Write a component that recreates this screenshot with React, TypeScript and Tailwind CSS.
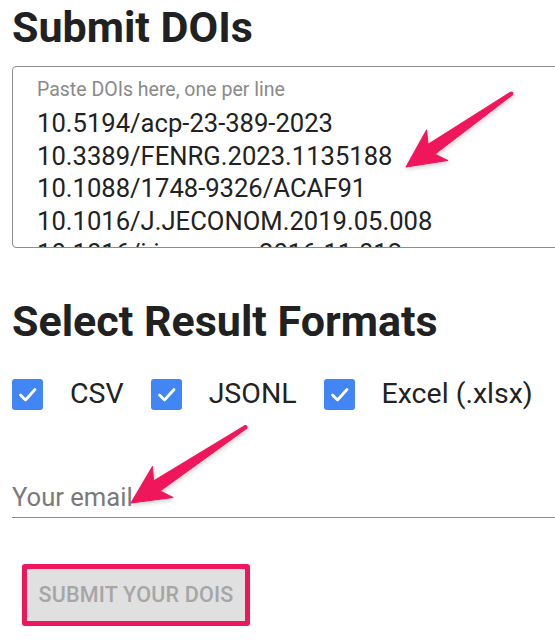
import React from "react";

const dois = [
  "10.5194/acp-23-389-2023",
  "10.3389/FENRG.2023.1135188",
  "10.1088/1748-9326/ACAF91",
  "10.1016/J.JECONOM.2019.05.008",
  "10.1016/j.jeconom.2016.11.012",
];

function Check() {
  return (
    <span className="flex h-[31px] w-[31px] shrink-0 items-center justify-center rounded-[3px] bg-[#4285f4]">
      <svg width="31" height="31" viewBox="0 0 31 31">
        <polyline
          points="8.5,16 13.5,21 23,10.5"
          fill="none"
          stroke="#ffffff"
          strokeWidth="2.8"
          strokeLinecap="round"
          strokeLinejoin="round"
        />
      </svg>
    </span>
  );
}

function Option({ label }: { label: string }) {
  return (
    <label className="flex items-center gap-[27px]">
      <Check />
      <span className="text-[28.5px] leading-[32px] text-[#222]">{label}</span>
    </label>
  );
}

function Arrow({ x, y, angle, len }: { x: number; y: number; angle: number; len: number }) {
  const pts = `0,0 38,-18.5 31,-6 ${len},-1.6 ${len + 1.2},0 ${len},1.6 31,6 38,18.5`;
  return (
    <g transform={`translate(${x} ${y}) rotate(${angle})`}>
      <polygon points={pts} fill="#f0165b" stroke="#f0165b" strokeWidth="1" strokeLinejoin="round" />
    </g>
  );
}

export default function App() {
  return (
    <div className="relative h-[640px] w-[555px] overflow-hidden bg-white pl-[12px] font-['Roboto',sans-serif]">
      <h1 className="pt-[2px] text-[43px] font-bold leading-[50px] text-[#212121]">Submit DOIs</h1>

      <div className="mt-[14px] h-[182px] w-[570px] overflow-hidden rounded-[4px] border border-[#8d8d8d] pl-[24px] pt-[13px]">
        <div className="text-[19.5px] leading-[19px] text-[#8a8a8a]">Paste DOIs here, one per line</div>
        <div className="mt-[8px] text-[25.6px] leading-[32.5px] text-[#222]">
          {dois.map((d) => (
            <div key={d}>{d}</div>
          ))}
        </div>
      </div>

      <h2 className="mt-[48px] text-[43px] font-bold leading-[50px] text-[#212121]">Select Result Formats</h2>

      <div className="mt-[32px] flex items-center gap-[27px]">
        <Option label="CSV" />
        <Option label="JSONL" />
        <Option label="Excel (.xlsx)" />
      </div>

      <div className="mt-[72px] w-[570px] border-b border-[#8d8d8d] pb-[5px]">
        <div className="text-[25.6px] leading-[30px] text-[#7a7a7a]">Your email</div>
      </div>

      <div className="ml-[10px] mt-[46px] w-[228px] rounded-[3px] border-[5px] border-[#f0165b]">
        <div className="flex h-[52px] items-center justify-center bg-[#e0e0e0] text-[21.5px] font-medium tracking-[0.01em] text-[#a6a6a6]">
          SUBMIT YOUR DOIS
        </div>
      </div>

      <svg
        className="pointer-events-none absolute left-0 top-0"
        width="555"
        height="640"
        style={{ filter: "drop-shadow(1px 2px 2px rgba(0,0,0,0.18))" }}
      >
        <Arrow x={406} y={167} angle={-34.9} len={129} />
        <Arrow x={131} y={503} angle={-33.5} len={138} />
      </svg>
    </div>
  );
}
